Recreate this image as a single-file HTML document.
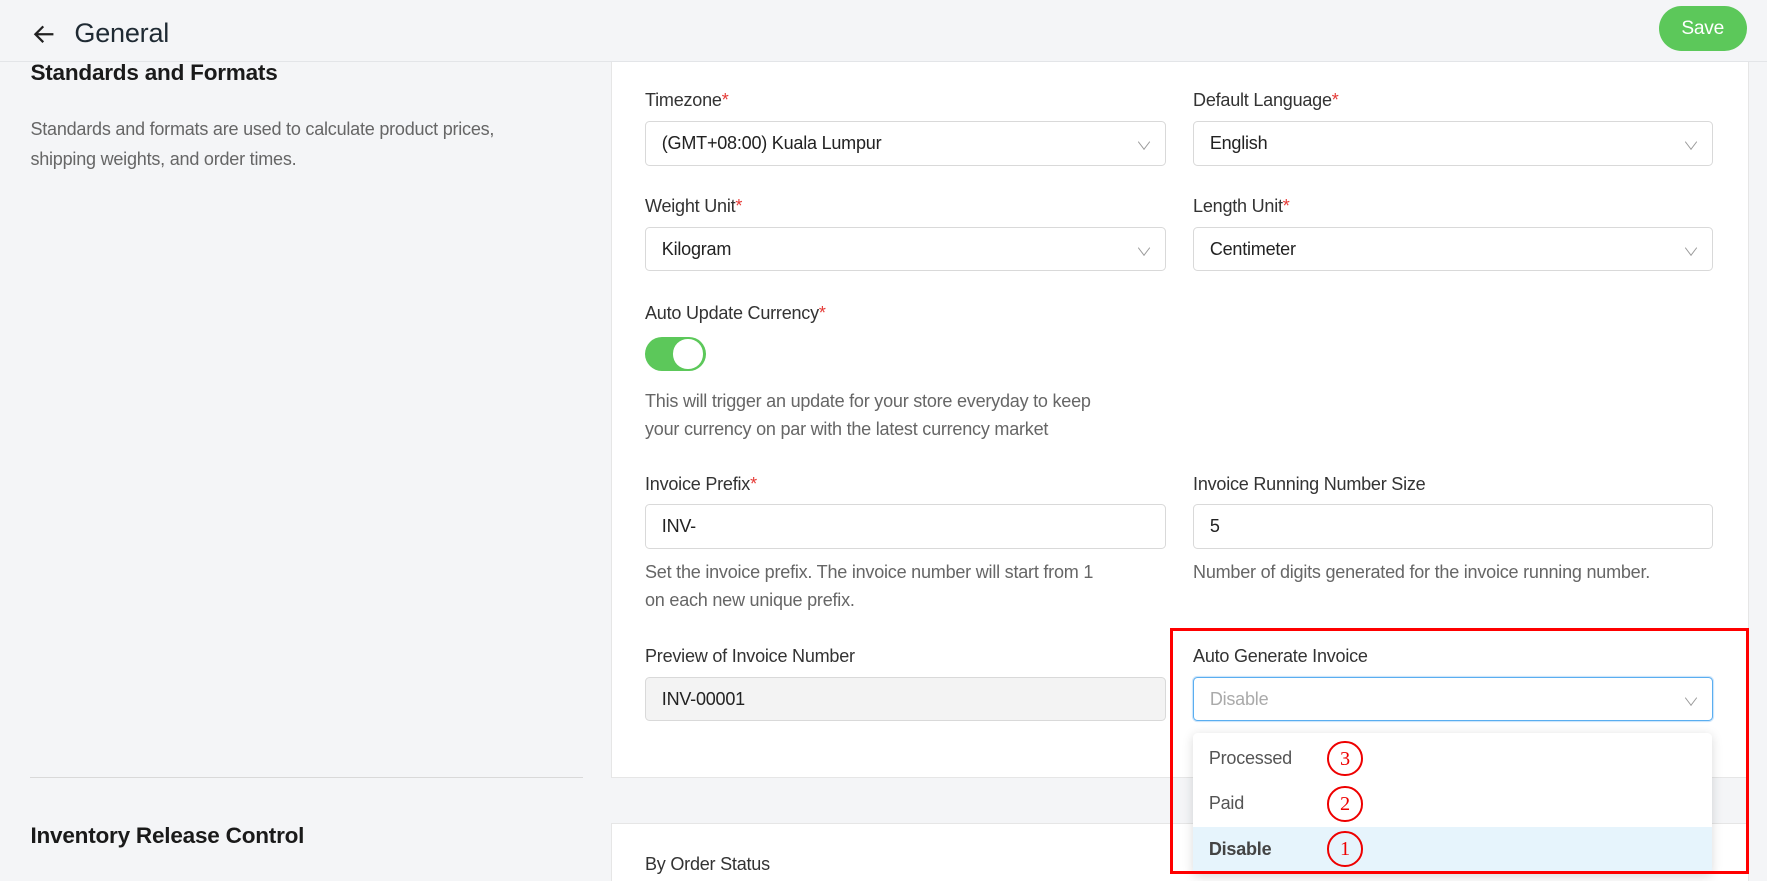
<!DOCTYPE html>
<html><head><meta charset="utf-8"><style>
html,body{margin:0;padding:0;overflow:hidden}
body{width:1767px;height:881px;background:#f4f5f7;font-family:"Liberation Sans",sans-serif;color:#222}
#w{zoom:1.12763;width:1567px;height:781px;position:relative;overflow:hidden;letter-spacing:-0.2px}
.a{position:absolute}
.lbl{position:absolute;font-size:16px;color:#333}
.lbl i{color:#e53935;font-style:normal}
.sel{position:absolute;height:38px;border:1px solid #d9d9d9;border-radius:4px;background:#fff;font-size:16px;line-height:38px;padding-left:14px;box-sizing:content-box;color:#222}
.chev{position:absolute;right:14px;top:14px;width:8px;height:8px;border-right:1px solid #999;border-bottom:1px solid #999;transform:rotate(45deg) skew(8deg,8deg)}
.help{position:absolute;font-size:16px;color:#666;line-height:25px}
.circ{position:absolute;width:28px;height:28px;border:2px solid #e00;border-radius:50%;color:#e00;font-size:18px;text-align:center;line-height:30px;left:1177px;font-family:"Liberation Serif",serif}
.it{position:absolute;left:1058px;width:460px;height:40px;line-height:40px;padding-left:14px;box-sizing:border-box;font-size:16px;color:#555}
</style></head><body><div id="w">
<div class="a" style="left:0;top:0;width:1567px;height:54px;border-bottom:1px solid #e3e5e8"></div>
<svg class="a" style="left:28px;top:20px" width="22" height="20" viewBox="0 0 22 20"><path d="M19 10H3M10 3L3 10l7 7" fill="none" stroke="#222" stroke-width="2"/></svg>
<div class="a" style="left:66px;top:16px;font-size:24px;color:#1f2a33">General</div>
<div class="a" style="left:1471px;top:5px;width:78px;height:40px;border-radius:20px;background:#5cc85a;color:#fff;font-size:17px;text-align:center;line-height:40px">Save</div>
<div class="a" style="left:27px;top:53px;font-size:20px;font-weight:bold;color:#1a1a1a">Standards and Formats</div>
<div class="help" style="left:27px;top:101px;width:450px;line-height:27px">Standards and formats are used to calculate product prices, shipping weights, and order times.</div>
<div class="a" style="left:27px;top:689px;width:490px;height:1px;background:#d9d9d9"></div>
<div class="a" style="left:27px;top:730px;font-size:20px;font-weight:bold;color:#1a1a1a">Inventory Release Control</div>
<div class="a" style="left:542px;top:55px;width:1007px;height:634px;background:#fff;border:1px solid #e6e6e6;border-top:none"></div>
<div class="a" style="left:542px;top:730px;width:1007px;height:60px;background:#fff;border:1px solid #e6e6e6"></div>
<div class="lbl" style="left:572px;top:757px">By Order Status</div>

<div class="lbl" style="left:572px;top:80px">Timezone<i>*</i></div>
<div class="sel" style="left:572px;top:107px;width:446px">(GMT+08:00) Kuala Lumpur<span class="chev"></span></div>
<div class="lbl" style="left:1058px;top:80px">Default Language<i>*</i></div>
<div class="sel" style="left:1058px;top:107px;width:445px">English<span class="chev"></span></div>
<div class="lbl" style="left:572px;top:174px">Weight Unit<i>*</i></div>
<div class="sel" style="left:572px;top:201px;width:446px">Kilogram<span class="chev"></span></div>
<div class="lbl" style="left:1058px;top:174px">Length Unit<i>*</i></div>
<div class="sel" style="left:1058px;top:201px;width:445px">Centimeter<span class="chev"></span></div>
<div class="lbl" style="left:572px;top:269px">Auto Update Currency<i>*</i></div>
<div class="a" style="left:572px;top:299px;width:54px;height:30px;border-radius:15px;background:#5cc85a"></div>
<div class="a" style="left:597px;top:301px;width:26px;height:26px;border-radius:50%;background:#fff"></div>
<div class="help" style="left:572px;top:343px;width:420px">This will trigger an update for your store everyday to keep your currency on par with the latest currency market</div>
<div class="lbl" style="left:572px;top:420px">Invoice Prefix<i>*</i></div>
<div class="sel" style="left:572px;top:447px;width:446px">INV-</div>
<div class="lbl" style="left:1058px;top:420px">Invoice Running Number Size</div>
<div class="sel" style="left:1058px;top:447px;width:445px">5</div>
<div class="help" style="left:572px;top:495px;width:410px">Set the invoice prefix. The invoice number will start from 1 on each new unique prefix.</div>
<div class="help" style="left:1058px;top:495px;width:480px">Number of digits generated for the invoice running number.</div>
<div class="lbl" style="left:572px;top:573px">Preview of Invoice Number</div>
<div class="sel" style="left:572px;top:600px;width:446px;background:#f3f3f3">INV-00001</div>
<div class="lbl" style="left:1058px;top:573px">Auto Generate Invoice</div>
<div class="sel" style="left:1058px;top:600px;width:445px;border-color:#5aaef0;color:#aaa;box-shadow:0 0 0 1px #cfe6fb">Disable<span class="chev"></span></div>
<div class="a" style="left:1058px;top:650px;width:460px;height:125px;background:#fff;box-shadow:0 2px 10px rgba(0,0,0,.15);border-radius:4px"></div>
<div class="it" style="top:653px">Processed</div>
<div class="it" style="top:693px">Paid</div>
<div class="it" style="top:733px;height:42px;background:#e6f4fc;font-weight:bold;color:#444">Disable</div>
<div class="circ" style="top:657px">3</div>
<div class="circ" style="top:697px">2</div>
<div class="circ" style="top:737px">1</div>
<div class="a" style="left:1038px;top:557px;width:508px;height:213px;border:3px solid #f00"></div>
</div></body></html>
